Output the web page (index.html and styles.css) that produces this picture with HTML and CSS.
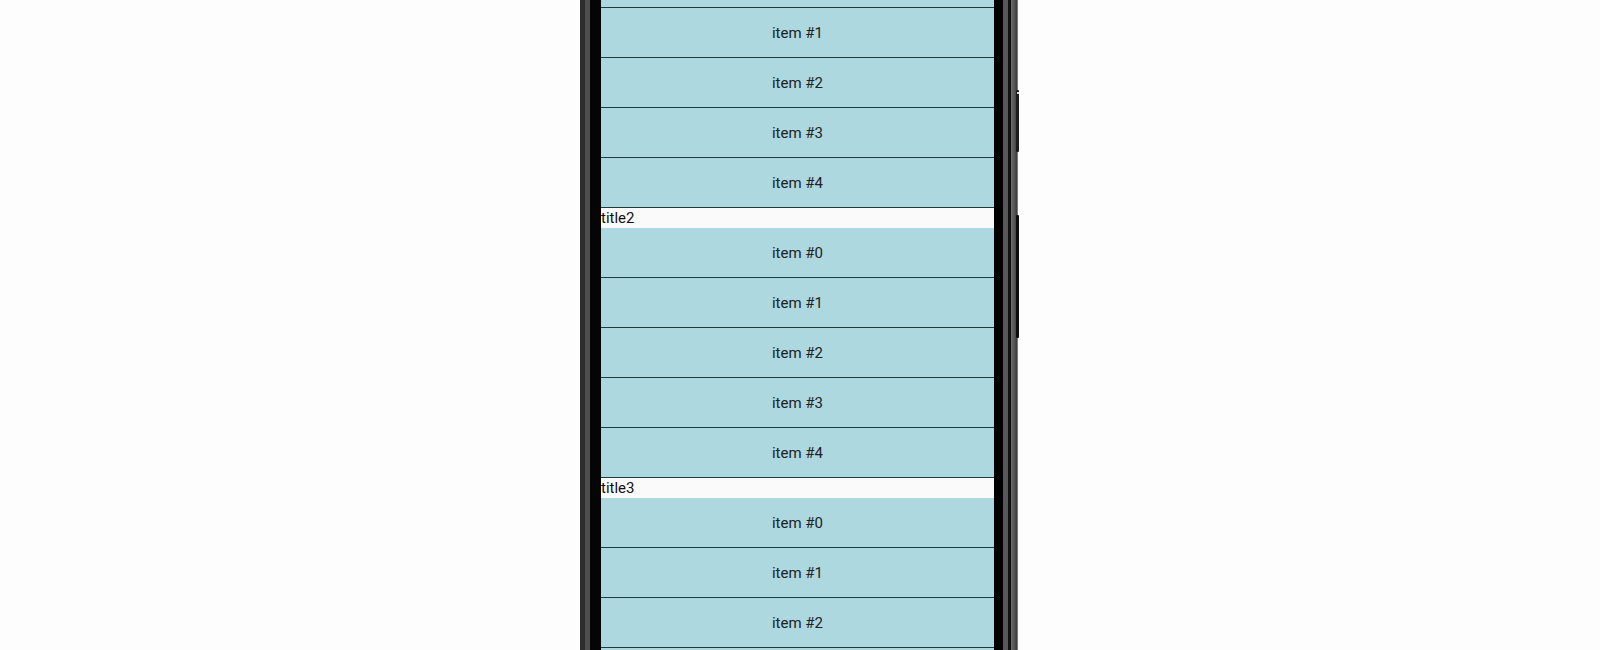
FILE: index.html
```html
<!DOCTYPE html>
<html lang="en">

<head>
    <meta charset="UTF-8">
    <meta name="viewport" content="width=device-width, initial-scale=1.0">
    <title>Sticky list</title>
    <link rel="stylesheet" href="styles.css">
</head>

<body>
    <div class="page">
        <div class="phone">
            <span class="btn btn-power"></span>
            <span class="btn btn-volume"></span>
            <div class="screen">
                <div class="list">
                    <div class="title">title1</div>
                    <div class="item">item #0</div>
                    <div class="item">item #1</div>
                    <div class="item">item #2</div>
                    <div class="item">item #3</div>
                    <div class="item">item #4</div>

                    <div class="title">title2</div>
                    <div class="item">item #0</div>
                    <div class="item">item #1</div>
                    <div class="item">item #2</div>
                    <div class="item">item #3</div>
                    <div class="item">item #4</div>

                    <div class="title">title3</div>
                    <div class="item">item #0</div>
                    <div class="item">item #1</div>
                    <div class="item">item #2</div>
                    <div class="item">item #3</div>
                    <div class="item">item #4</div>
                </div>
            </div>
        </div>
    </div>
</body>

</html>
```

FILE: styles.css
```css
html,
body {
    margin: 0;
    padding: 0;
    height: 100%;
    overflow: hidden;
    background-color: #fdfdfd;
    font-family: Roboto, "Noto Sans", sans-serif;
}

.page {
    height: 650px;
    display: flex;
    justify-content: center;
}

/* phone body: bezel stripes drawn with one gradient */
.phone {
    position: relative;
    width: 438px;
    height: 700px;
    margin-top: -20px;
    margin-right: 2px;
    padding: 0 24px 0 21px;
    box-sizing: border-box;
    background: linear-gradient(to right,
            #2c2c2c 0, #2c2c2c 5px,
            #4e4e4e 5px, #4e4e4e 10px,
            #050505 10px, #050505 21px,
            #000 414px, #000 423px,
            #585858 423px, #585858 428px,
            #111 428px, #111 431px,
            #6e6e6e 431px, #3c3c3c 437px,
            #bbb 438px);
}

.btn {
    position: absolute;
    right: -1px;
    width: 3px;
    background-color: #1c1c1c;
    border-radius: 1px;
}

.btn-power {
    top: 110px;
    height: 62px;
}

.btn-power::before {
    content: "";
    position: absolute;
    top: 2px;
    left: 1px;
    width: 2px;
    height: 2px;
    background-color: #ddd;
}

.btn-volume {
    top: 235px;
    height: 123px;
    background-color: #0c0c0c;
}

.screen {
    height: 100%;
    overflow: hidden;
    background-color: #fafafa;
}

/* list is scrolled a bit past the first header */
.list {
    margin-top: -42px;
}

.title {
    height: 20px;
    line-height: 20px;
    font-size: 15px;
    color: #111;
    background-color: #fafafa;
}

.item {
    height: 49px;
    border-bottom: 1px solid #1f3a40;
    background-color: #add8e0;
    display: flex;
    align-items: center;
    justify-content: center;
    font-size: 15px;
    color: #222;
}
```
